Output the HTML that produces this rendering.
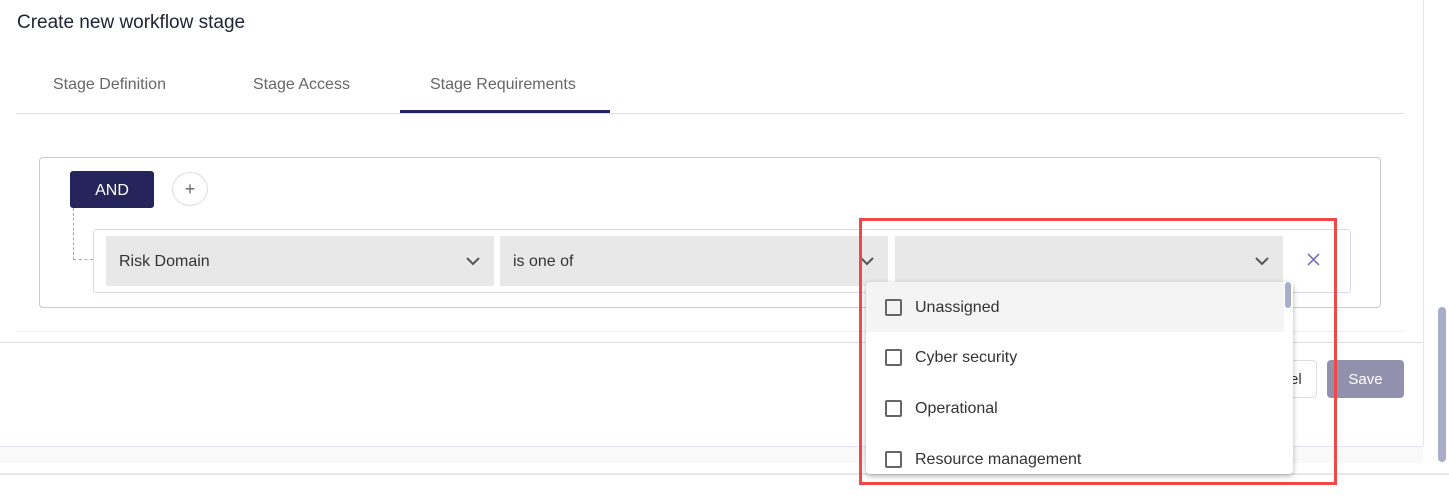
<!DOCTYPE html>
<html><head><style>
*{box-sizing:border-box;margin:0;padding:0}
body{width:1449px;height:500px;background:#fff;font-family:"Liberation Sans",sans-serif;position:relative;overflow:hidden}
.a{position:absolute}
.sel{position:absolute;top:236px;height:50px;background:#e8e8e8;font-size:16px;color:#333;padding:17px 0 0 13px}
.chev{position:absolute;right:14px;top:21px}
.item{position:absolute;left:0;width:418px;height:50px;font-size:16px;color:#333}
.cb{position:absolute;left:19px;top:17px;width:17px;height:17px;border:2px solid #666;border-radius:2px}
.item span{position:absolute;left:49px;top:17px}
</style></head><body>
<div class="a" style="left:17px;top:12px;font-size:19px;color:#1f2233">Create new workflow stage</div>
<div class="a" style="left:53px;top:76px;font-size:16px;color:#666">Stage Definition</div>
<div class="a" style="left:253px;top:76px;font-size:16px;color:#666">Stage Access</div>
<div class="a" style="left:430px;top:76px;font-size:16px;color:#666">Stage Requirements</div>
<div class="a" style="left:16px;top:113px;width:1388px;height:1px;background:#ddd"></div>
<div class="a" style="left:400px;top:110px;width:210px;height:3px;background:#25255c"></div>
<div class="a" style="left:1423px;top:0;width:1px;height:446px;background:#e6e6ee"></div>

<div class="a" style="left:39px;top:157px;width:1342px;height:151px;border:1px solid #ccc;border-radius:4px"></div>
<div class="a" style="left:70px;top:171px;width:84px;height:37px;background:#25255c;border-radius:3px;color:#fff;font-size:16px;text-align:center;line-height:39px">AND</div>
<div class="a" style="left:172px;top:172px;width:36px;height:34px;border:1px solid #ddd;border-radius:50%;text-align:center;line-height:32px;color:#666;font-size:18px">+</div>
<div class="a" style="left:73px;top:208px;width:20px;height:52px;border-left:1px dashed #aaa;border-bottom:1px dashed #aaa"></div>
<div class="a" style="left:93px;top:229px;width:1258px;height:64px;border:1px solid #d8d8ee;border-radius:3px"></div>
<div class="sel" style="left:106px;width:388px">Risk Domain<svg class="chev" width="14" height="9" viewBox="0 0 14 9"><path d="M1 1l6 6 6-6" fill="none" stroke="#555" stroke-width="2"/></svg></div>
<div class="sel" style="left:500px;width:388px">is one of<svg class="chev" width="14" height="9" viewBox="0 0 14 9"><path d="M1 1l6 6 6-6" fill="none" stroke="#555" stroke-width="2"/></svg></div>
<div class="sel" style="left:895px;width:388px"><svg class="chev" width="14" height="9" viewBox="0 0 14 9"><path d="M1 1l6 6 6-6" fill="none" stroke="#555" stroke-width="2"/></svg></div>
<svg class="a" style="left:1307px;top:253px" width="13" height="13" viewBox="0 0 13 13"><path d="M1 1l11 11M12 1L1 12" stroke="#7a74b8" stroke-width="1.6"/></svg>

<div class="a" style="left:16px;top:331px;width:1388px;height:1px;background:#eee"></div>
<div class="a" style="left:0;top:342px;width:1423px;height:1px;background:#ddd"></div>
<div class="a" style="left:1240px;top:360px;width:77px;height:38px;border:1px solid #ddd;border-radius:4px;font-size:15px;color:#333;line-height:38px;text-align:left;padding-left:14px">Cancel</div>
<div class="a" style="left:1327px;top:360px;width:77px;height:38px;background:#9191ad;border-radius:4px;color:#fff;font-size:15px;line-height:40px;text-align:center">Save</div>
<div class="a" style="left:0;top:446px;width:1423px;height:1px;background:#e4e2f5"></div>
<div class="a" style="left:0;top:447px;width:1423px;height:16px;background:#f9f9f9"></div>
<div class="a" style="left:0;top:473px;width:1449px;height:2px;background:#e8e8e8"></div>
<div class="a" style="left:1438px;top:307px;width:8px;height:155px;background:#a8adc8;border-radius:4px"></div>

<div class="a" style="left:866px;top:282px;width:427px;height:192px;background:#fff;border-radius:4px;box-shadow:0 2px 6px rgba(0,0,0,.3);overflow:hidden">
<div class="item" style="top:0;background:#f4f4f4"><div class="cb"></div><span>Unassigned</span></div>
<div class="item" style="top:50px"><div class="cb"></div><span>Cyber security</span></div>
<div class="item" style="top:101px"><div class="cb"></div><span>Operational</span></div>
<div class="item" style="top:152px"><div class="cb"></div><span>Resource management</span></div>
<div class="a" style="left:419px;top:0;width:6px;height:26px;background:#a8adc8;border-radius:3px"></div>
</div>
<div class="a" style="left:859px;top:218px;width:478px;height:267px;border:3px solid #f04848"></div>
</body></html>
